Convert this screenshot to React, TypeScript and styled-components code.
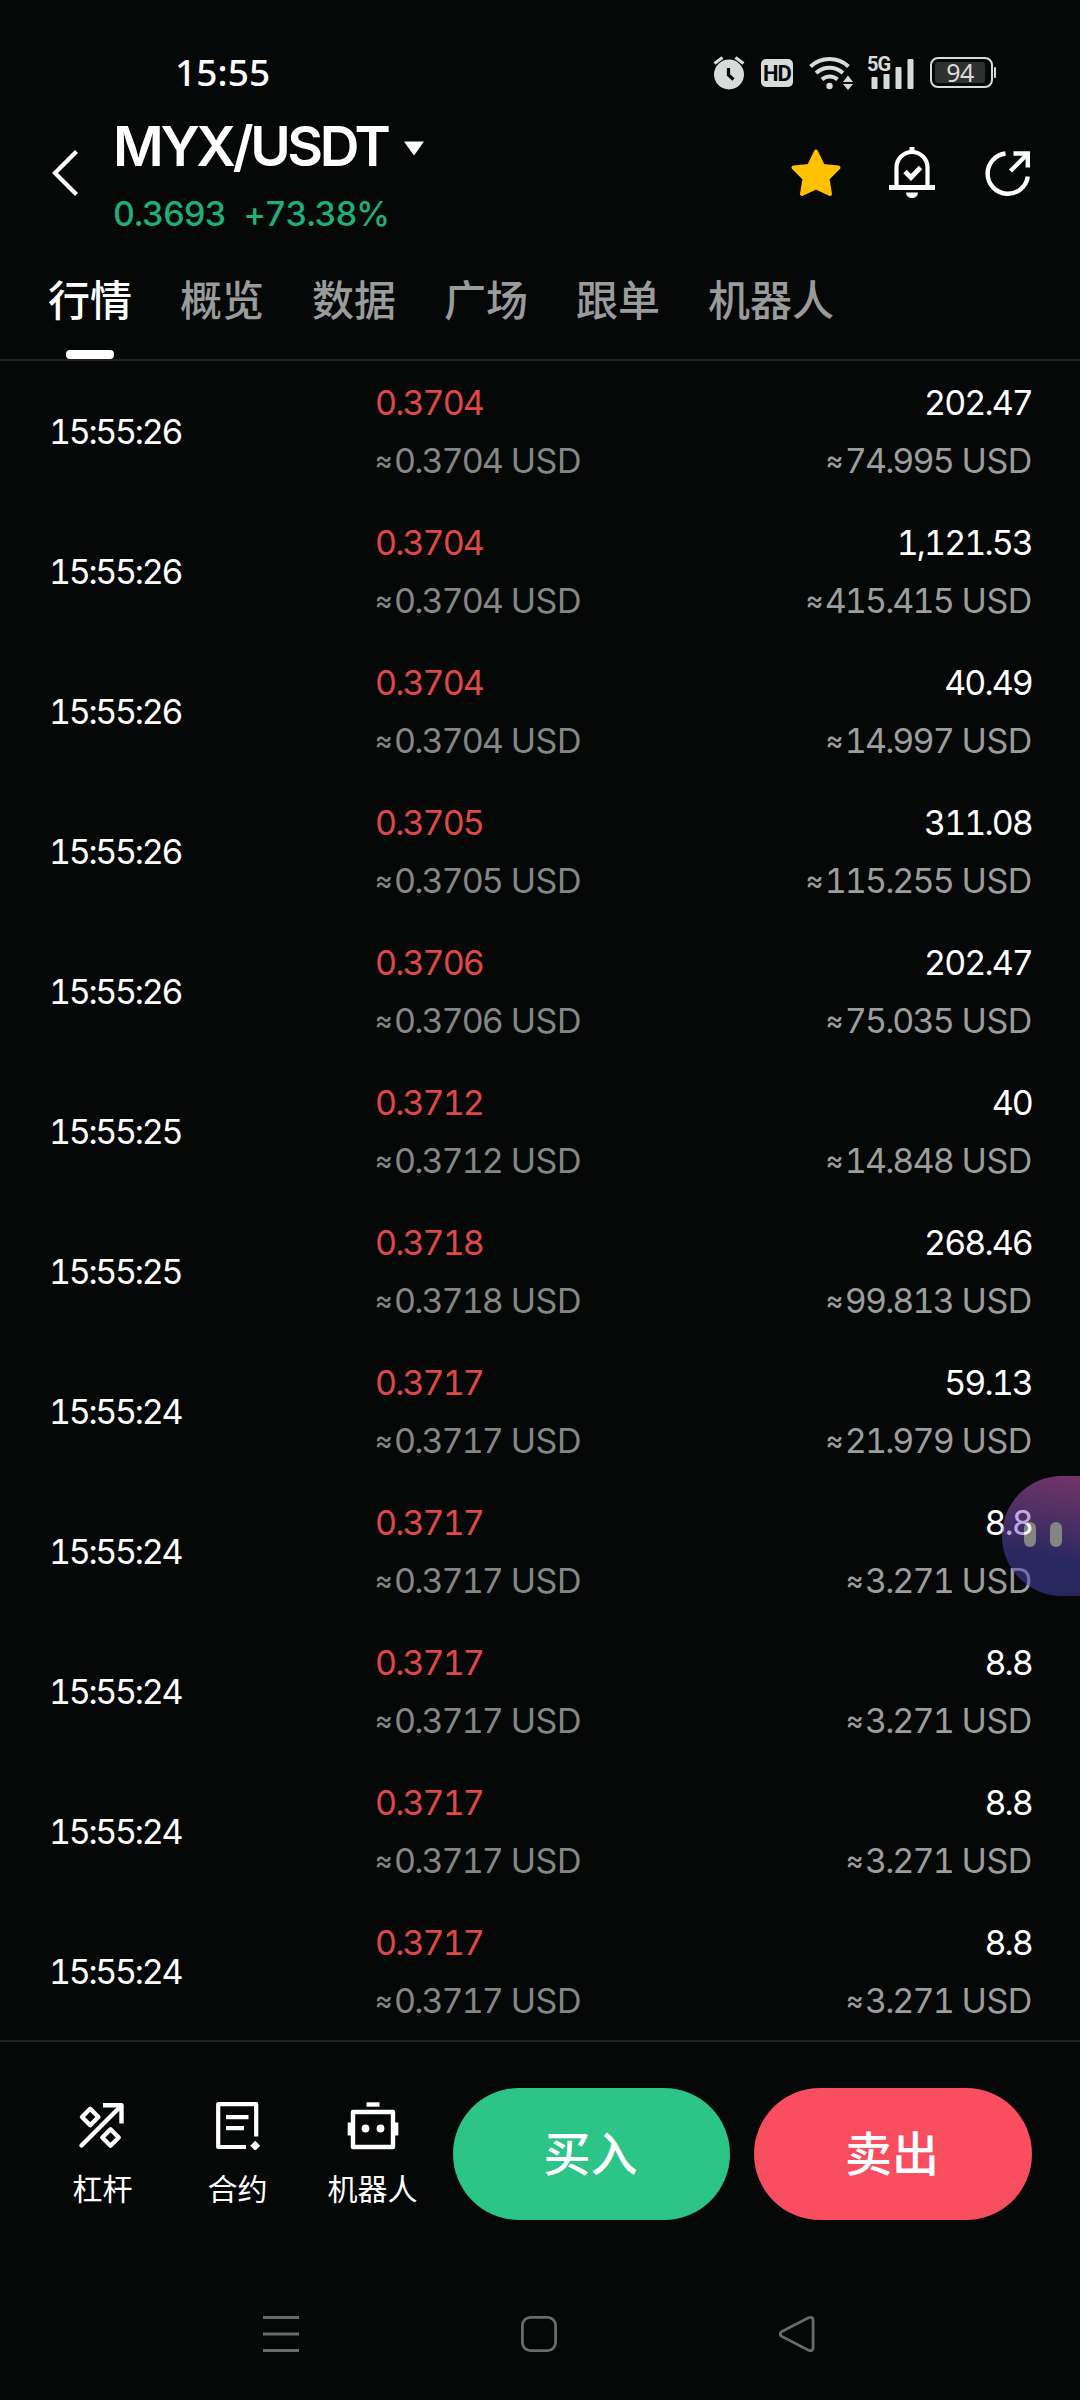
import React from "react";
import styled, { createGlobalStyle } from "styled-components";

const latin = `Inter, "Liberation Sans", sans-serif`;
const cjk = `"Noto Sans CJK SC", "Noto Sans", sans-serif`;

const GlobalStyle = createGlobalStyle`
  * { box-sizing: border-box; }
  body { margin: 0; background: #060808; }
  svg { display: block; flex: none; }
  button { border: 0; padding: 0; background: none; font: inherit; color: inherit; }
`;

const Page = styled.div`
  position: relative;
  display: flex;
  flex-direction: column;
  width: 1080px;
  height: 2400px;
  overflow: hidden;
  background: #060808;
  color: #fff;
  font-family: ${latin};
`;

const StatusBar = styled.div`
  display: flex;
  align-items: center;
  justify-content: space-between;
  height: 112px;
  padding: 33px 84px 0 175px;
  color: #d9dada;
`;

const Clock = styled.span`
  color: #fff;
  margin-top: -2px;
  font: 500 37px/40px "Noto Sans", sans-serif;
  letter-spacing: 0.1px;
`;

const StatusIcons = styled.div`
  display: flex;
  align-items: center;
  gap: 16px;
`;

const HdBadge = styled.span`
  width: 32px;
  height: 28px;
  border-radius: 5px;
  background: #d9dada;
  color: #060808;
  font: 700 22px/29px Roboto, sans-serif;
  letter-spacing: -1px;
  text-align: center;
`;

const SignalGroup = styled.div`
  position: relative;
  margin-left: -2px;
`;

const NetworkType = styled.span`
  position: absolute;
  top: 0;
  left: 0;
  font: 700 20px/17px Roboto, sans-serif;
  letter-spacing: -1px;
`;

const Battery = styled.div`
  display: flex;
  align-items: center;
  gap: 1px;
`;

const BatteryShell = styled.div`
  width: 63px;
  height: 31px;
  padding: 3px;
  border: 2px solid #d9dada;
  border-radius: 8px;
`;

const BatteryLevel = styled.div`
  width: 50px;
  height: 21px;
  border-radius: 3px;
  background: #303131;
  font: 400 25px/21px "Noto Sans", sans-serif;
  letter-spacing: -0.5px;
  text-align: center;
`;

const BatteryNub = styled.i`
  width: 2px;
  height: 11px;
  border-radius: 1px;
  background: #d9dada;
`;

const Header = styled.header`
  display: flex;
  align-items: center;
  height: 121px;
  padding: 0 49px 0 50px;
`;

const PairInfo = styled.div`
  align-self: flex-start;
  margin-left: 33px;
  padding-top: 4px;
`;

const PairName = styled.div`
  display: flex;
  align-items: center;
  gap: 15px;
  font-size: 55px;
  font-weight: 600;
  line-height: 60px;
  letter-spacing: -3.3px;
`;

const Ticker = styled.div`
  display: flex;
  gap: 18px;
  margin-top: 18px;
  color: #1eb07a;
  font-size: 34px;
  font-weight: 500;
  font-variant-numeric: tabular-nums;
  line-height: 40px;
  letter-spacing: -1.1px;
`;

const HeaderActions = styled.div`
  display: flex;
  align-items: center;
  gap: 48px;
  margin-left: auto;
`;

const Tabs = styled.nav`
  display: flex;
  gap: 48px;
  height: 128px;
  padding: 35px 48px 0;
  border-bottom: 2px solid #202222;
  font: 500 42px/60px ${cjk};
`;

const Tab = styled.div<{ $active?: boolean }>`
  display: flex;
  flex-direction: column;
  align-items: center;
  justify-content: space-between;
  color: ${(p) => (p.$active ? "#fff" : "#9a9b9b")};

  &::after {
    content: "";
    width: 48px;
    height: 9px;
    border-radius: 4px;
    background: ${(p) => (p.$active ? "#fff" : "transparent")};
  }
`;

const TradeList = styled.main`
  height: 1679px;
  overflow: hidden;
`;

const TradeRow = styled.div`
  display: grid;
  grid-template-columns: 326px 1fr auto;
  align-items: center;
  height: 140px;
  padding: 1px 48px 0 49px;
  font-size: 34px;
  font-variant-numeric: tabular-nums;
  line-height: 58px;
  letter-spacing: -1.9px;
`;

const Time = styled.span`
  letter-spacing: -2.3px;
`;

const Stack = styled.div<{ $end?: boolean }>`
  display: flex;
  flex-direction: column;
  align-items: ${(p) => (p.$end ? "flex-end" : "flex-start")};
`;

const Price = styled.span`
  color: #e04846;
`;

const Converted = styled.span<{ $tone: string }>`
  display: flex;
  color: ${(p) => p.$tone};
`;

const Approx = styled.span`
  width: 19px;
  font-size: 27px;
  font-weight: 500;
  line-height: 58px;
`;

const Unit = styled.span`
  letter-spacing: -0.4px;
`;

const ActionBar = styled.footer`
  display: flex;
  align-items: flex-start;
  height: 240px;
  padding: 46px 48px 0 35px;
  border-top: 2px solid #202222;
`;

const Shortcut = styled.button`
  display: flex;
  flex-direction: column;
  align-items: center;
  gap: 17px;
  width: 135px;
  padding-top: 12px;
  font: 400 30px/40px ${cjk};
`;

const TradeButtons = styled.div`
  display: grid;
  grid-template-columns: 277px 278px;
  flex: 1;
  gap: 24px;
  margin-left: 13px;
`;

const TradeButton = styled.button<{ $color: string }>`
  height: 132px;
  padding: 0 2px 7px 0;
  border-radius: 66px;
  background: ${(p) => p.$color};
  color: #fff;
  font: 500 47px/66px ${cjk};
`;

const SystemNav = styled.div`
  display: flex;
  align-items: center;
  justify-content: space-between;
  height: 108px;
  padding: 0 265px 0 262px;
`;

const Assistant = styled.div`
  position: absolute;
  top: 1476px;
  right: 0;
  display: flex;
  gap: 14px;
  width: 78px;
  height: 120px;
  padding: 46px 0 0 22px;
  border-radius: 60px 0 0 60px;
  background: linear-gradient(190deg, #e060c8 0%, #9a58c0 32%, #5048b8 65%, #4646b0 100%);
  opacity: 0.5;
`;

const Eye = styled.i`
  width: 12px;
  height: 25px;
  border-radius: 6px;
  background: #fff;
`;

const AlarmIcon = () => (
  <svg width="32" height="35" viewBox="0 0 32 35" fill="none">
    <circle cx="16" cy="19.5" r="15" fill="#d9dada" />
    <path d="M1.5 8.5 9.5 2.5M30.500 8.5 22.500 2.500" stroke="#d9dada" strokeWidth="3.2" />
    <path d="M15.500 13v7l5 4.500" stroke="#060808" strokeWidth="3.2" />
  </svg>
);

const WifiIcon = () => (
  <svg width="44" height="35" viewBox="0 0 44 35" fill="none" stroke="#d9dada" strokeWidth="4">
    <path d="M1.500 11.500a28 28 0 0 1 38 0" />
    <path d="M7 18a20 20 0 0 1 27 0" />
    <path d="M13 24.500a11.500 11.500 0 0 1 15.500 0" />
    <circle cx="20.500" cy="31" r="3.200" fill="#d9dada" stroke="none" />
    <path d="M39 20.500l5 6.500H34zM39 35l5-6H34z" fill="#d9dada" stroke="none" />
  </svg>
);

const SignalIcon = () => (
  <svg width="47" height="34" viewBox="0 0 47 34" fill="#d9dada">
    <rect x="4.500" y="21" width="6" height="12" rx="1" />
    <rect x="16.500" y="18" width="6" height="15" rx="1" />
    <rect x="28.500" y="11" width="6" height="22" rx="1" />
    <rect x="40.500" y="3" width="6" height="30" rx="1" />
  </svg>
);

const BackIcon = () => (
  <svg width="30" height="48" viewBox="0 0 30 48" fill="none">
    <path d="M26.500 2.500 5 24l21.500 21.500" stroke="#fff" strokeWidth="4.200" />
  </svg>
);

const CaretIcon = () => (
  <svg width="22" height="20" viewBox="0 -4 22 20">
    <path d="M1 1.500h20L11.800 14.500q-.8 1-1.600 0z" fill="#fff" />
  </svg>
);

const StarIcon = () => (
  <svg width="53" height="50" viewBox="-2 0 53 50">
    <path
      d="M26 3.500 33 18 48.500 19.500 37.500 30.500 40 46 26 39.500 12 46 14.500 30.500 3.500 19.500 19 18z"
      fill="#ffc000"
      stroke="#ffc000"
      strokeWidth="4"
      strokeLinejoin="round"
    />
  </svg>
);

const BellIcon = () => (
  <svg width="48" height="52" viewBox="0 0 48 52" fill="none" stroke="#fff">
    <path d="M23 0v5" strokeWidth="5" />
    <path d="M7.500 40V20.500a15.500 15.500 0 0 1 31 0V40" strokeWidth="4.200" />
    <path d="M0 40.500h46" strokeWidth="5" />
    <path d="m16 24.500 6 6 9.500-10" strokeWidth="4.800" />
    <path d="M17 45.500h12a6 5.500 0 0 1-12 0z" fill="#fff" stroke="none" />
  </svg>
);

const ShareIcon = () => (
  <svg width="46" height="48" viewBox="0 0 46 48" fill="none" stroke="#fff" strokeWidth="4.400">
    <path d="M20.500 4.500a20.200 20.200 0 1 0 22.300 23" />
    <path d="M25.500 22 42 5.500" />
    <path d="M28.500 4.500H42.800V18.500" />
  </svg>
);

const LeverageIcon = () => (
  <svg width="50" height="50" viewBox="0 0 50 50" fill="none" stroke="#fff" strokeWidth="4.400" strokeLinejoin="round">
    <path d="M3.500 45.500 43 6" strokeLinecap="round" />
    <path d="M25 5.200h18.500V23.500" />
    <path d="m12.200 8.800 8.200 8.200-8.200 8.200L4 17z" />
    <path d="m32.500 29.300 8.200 8.200-8.200 8.200-8.200-8.200z" />
  </svg>
);

const ContractIcon = () => (
  <svg width="50" height="50" viewBox="0 0 50 50" fill="none" stroke="#fff" strokeWidth="4.200" strokeLinejoin="round">
    <path d="M33 47H5.200V4.200H43.200V36.500" />
    <path d="M13 17.200h22.500M13 28.200h18" />
    <path d="m42.200 40.800 5 5-5 5-5-5z" fill="#fff" stroke="none" />
  </svg>
);

const RobotIcon = () => (
  <svg width="52" height="50" viewBox="0 0 52 50" fill="none" stroke="#fff" strokeWidth="4.400" strokeLinejoin="round">
    <path d="M19.500 4.500h13" />
    <rect x="6" y="12" width="40" height="35" />
    <path d="M3 22.500v13M49 22.500v13" strokeWidth="4.600" strokeLinejoin="miter" />
    <circle cx="18.500" cy="28.500" r="3.900" fill="#fff" stroke="none" />
    <circle cx="33.500" cy="28.500" r="3.900" fill="#fff" stroke="none" />
  </svg>
);

const MenuIcon = () => (
  <svg width="38" height="38" viewBox="0 0 38 38" stroke="#6a6b6b" strokeWidth="3.200">
    <path d="M1 2.500h36M1 19h36M1 35.500h36" />
  </svg>
);

const HomeIcon = () => (
  <svg width="38" height="38" viewBox="0 0 38 38" fill="none" stroke="#6a6b6b" strokeWidth="2.800">
    <rect x="2.400" y="2.400" width="33.200" height="33.200" rx="8" />
  </svg>
);

const ReturnIcon = () => (
  <svg width="38" height="38" viewBox="0 0 38 38" fill="none" stroke="#6a6b6b" strokeWidth="2.800">
    <path d="M4.400 16.800 31.500 2.800q4.200-1.500 4.600 2.200v28q-.4 3.700-4.600 2.200L4.400 21.200q-2.400-2.200 0-4.400z" />
  </svg>
);

const tabs = ["行情", "概览", "数据", "广场", "跟单", "机器人"];

const trades = [
  ["15:55:26", "0.3704", "202.47", "74.995"],
  ["15:55:26", "0.3704", "1,121.53", "415.415"],
  ["15:55:26", "0.3704", "40.49", "14.997"],
  ["15:55:26", "0.3705", "311.08", "115.255"],
  ["15:55:26", "0.3706", "202.47", "75.035"],
  ["15:55:25", "0.3712", "40", "14.848"],
  ["15:55:25", "0.3718", "268.46", "99.813"],
  ["15:55:24", "0.3717", "59.13", "21.979"],
  ["15:55:24", "0.3717", "8.8", "3.271"],
  ["15:55:24", "0.3717", "8.8", "3.271"],
  ["15:55:24", "0.3717", "8.8", "3.271"],
  ["15:55:24", "0.3717", "8.8", "3.271"],
];

const Usd = ({ value, tone }: { value: string; tone: string }) => (
  <Converted $tone={tone}>
    <Approx>≈</Approx>
    <span>
      {value}
      <Unit> USD</Unit>
    </span>
  </Converted>
);

export default function App() {
  return (
    <>
      <GlobalStyle />
      <Page>
        <StatusBar>
          <Clock>15:55</Clock>
          <StatusIcons>
            <AlarmIcon />
            <HdBadge>HD</HdBadge>
            <WifiIcon />
            <SignalGroup>
              <NetworkType>5G</NetworkType>
              <SignalIcon />
            </SignalGroup>
            <Battery>
              <BatteryShell>
                <BatteryLevel>94</BatteryLevel>
              </BatteryShell>
              <BatteryNub />
            </Battery>
          </StatusIcons>
        </StatusBar>

        <Header>
          <BackIcon />
          <PairInfo>
            <PairName>
              <span>MYX/USDT</span>
              <CaretIcon />
            </PairName>
            <Ticker>
              <span>0.3693</span>
              <span>+73.38%</span>
            </Ticker>
          </PairInfo>
          <HeaderActions>
            <StarIcon />
            <BellIcon />
            <ShareIcon />
          </HeaderActions>
        </Header>

        <Tabs>
          {tabs.map((label, i) => (
            <Tab key={label} $active={i === 0}>
              {label}
            </Tab>
          ))}
        </Tabs>

        <TradeList>
          {trades.map(([time, price, amount, total], i) => (
            <TradeRow key={i}>
              <Time>{time}</Time>
              <Stack>
                <Price>{price}</Price>
                <Usd value={price} tone="#858686" />
              </Stack>
              <Stack $end>
                <span>{amount}</span>
                <Usd value={total} tone="#9c9d9d" />
              </Stack>
            </TradeRow>
          ))}
        </TradeList>

        <ActionBar>
          <Shortcut>
            <LeverageIcon />
            杠杆
          </Shortcut>
          <Shortcut>
            <ContractIcon />
            合约
          </Shortcut>
          <Shortcut>
            <RobotIcon />
            机器人
          </Shortcut>
          <TradeButtons>
            <TradeButton $color="#2dc488">买入</TradeButton>
            <TradeButton $color="#f94d60">卖出</TradeButton>
          </TradeButtons>
        </ActionBar>

        <SystemNav>
          <MenuIcon />
          <HomeIcon />
          <ReturnIcon />
        </SystemNav>

        <Assistant>
          <Eye />
          <Eye />
        </Assistant>
      </Page>
    </>
  );
}
